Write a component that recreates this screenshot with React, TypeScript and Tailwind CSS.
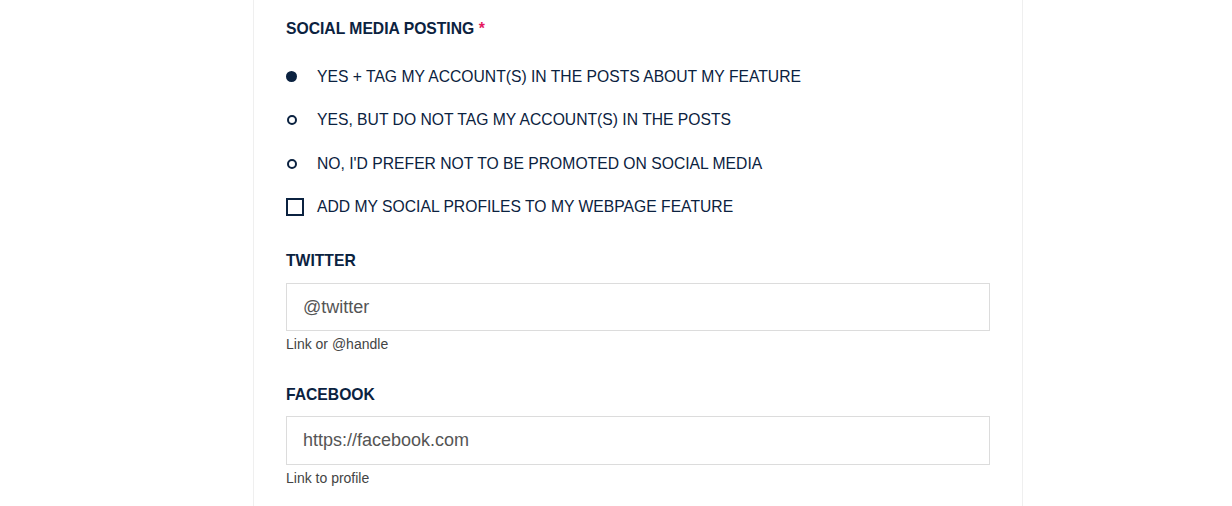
import React from "react";

const navy = "text-[#0b2240]";

function Radio({ checked, label }: { checked?: boolean; label: string }) {
  return (
    <div className="flex h-[43.5px] items-center">
      <div className="flex w-[31px] items-center">
        {checked ? (
          <span className="block h-[11px] w-[11px] rounded-full bg-[#0b2240]" />
        ) : (
          <span className="ml-[0.5px] block h-[10px] w-[10px] rounded-full border-2 border-[#0b2240]" />
        )}
      </div>
      <span className={`text-[15.7px] leading-[20px] ${navy}`}>{label}</span>
    </div>
  );
}

export default function App() {
  return (
    <div
      className="flex h-[506px] w-full overflow-hidden bg-white pl-[253px]"
      style={{ fontFamily: '"Liberation Sans", Arial, Helvetica, sans-serif' }}
    >
      <div className="w-[770px] shrink-0 border-x border-[#efefef] px-[32px] pt-[19px]">
        <div className={`text-[15.7px] font-bold leading-[20px] ${navy}`}>
          SOCIAL MEDIA POSTING <span className="text-[#e5195e]">*</span>
        </div>
        <div className="mt-[16px] flex flex-col">
          <Radio checked label="YES + TAG MY ACCOUNT(S) IN THE POSTS ABOUT MY FEATURE" />
          <Radio label="YES, BUT DO NOT TAG MY ACCOUNT(S) IN THE POSTS" />
          <Radio label="NO, I'D PREFER NOT TO BE PROMOTED ON SOCIAL MEDIA" />
          <div className="flex h-[43.5px] items-center">
            <div className="flex w-[31px] items-center">
              <span className="block h-[18px] w-[18px] border-2 border-[#0b2240]" />
            </div>
            <span className={`text-[15.7px] leading-[20px] ${navy}`}>
              ADD MY SOCIAL PROFILES TO MY WEBPAGE FEATURE
            </span>
          </div>
        </div>

        <div className={`mt-[22px] text-[15.7px] font-bold leading-[20px] ${navy}`}>TWITTER</div>
        <div className="mt-[12px] flex h-[48px] items-center border border-[#dcdcdc] px-[16px] text-[18px] text-[#555555]">
          @twitter
        </div>
        <div className="mt-[5px] text-[14px] leading-[16px] text-[#444444]">Link or @handle</div>

        <div className={`mt-[33px] text-[15.7px] font-bold leading-[20px] ${navy}`}>FACEBOOK</div>
        <div className="mt-[11px] flex h-[49px] items-center border border-[#dcdcdc] px-[16px] text-[18px] text-[#555555]">
          https://facebook.com
        </div>
        <div className="mt-[5px] text-[14px] leading-[16px] text-[#444444]">Link to profile</div>
      </div>
    </div>
  );
}
